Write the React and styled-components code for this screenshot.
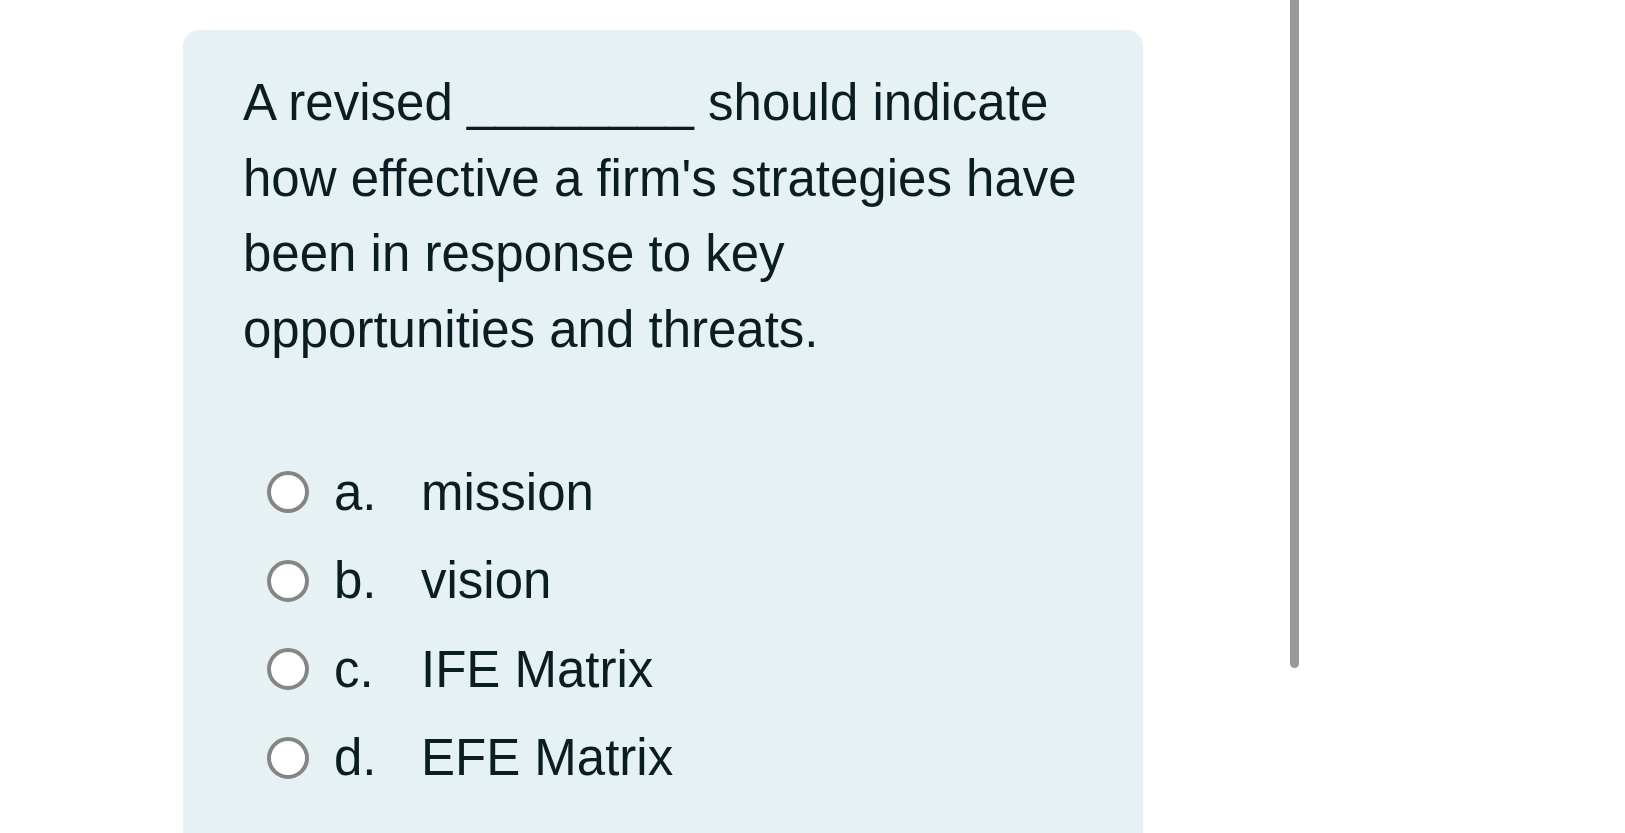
import styled, { createGlobalStyle } from 'styled-components';

const GlobalStyle = createGlobalStyle`
  html, body {
    margin: 0;
    padding: 0;
    background: #ffffff;
    overflow: hidden;
  }
  body {
    font-family: "Liberation Sans", Arial, sans-serif;
    color: #0a1d22;
  }
`;

const Page = styled.div`
  display: flex;
  align-items: stretch;
  height: 833px;
  padding-left: 183px;
  box-sizing: border-box;
  overflow: hidden;
`;

const Card = styled.div`
  width: 960px;
  margin-top: 30px;
  background: #e5f1f3;
  border-radius: 16px 16px 0 0;
  padding: 35px 60px 0 60px;
  box-sizing: border-box;
`;

const Question = styled.p`
  margin: 0;
  font-size: 51px;
  line-height: 75.5px;
`;

const Options = styled.ul`
  list-style: none;
  margin: 81px 0 0 0;
  padding: 0 0 0 24px;
`;

const Option = styled.li`
  display: flex;
  align-items: center;
  height: 88.5px;
  font-size: 51px;
  line-height: 75.5px;
`;

const Radio = styled.span`
  width: 42px;
  height: 42px;
  box-sizing: border-box;
  border: 4.5px solid #858585;
  border-radius: 50%;
  background: #ffffff;
  flex-shrink: 0;
  margin-right: 25px;
`;

const Letter = styled.span`
  width: 87px;
  flex-shrink: 0;
`;

const ScrollTrack = styled.div`
  align-self: flex-start;
  margin-left: 147px;
  width: 9px;
  height: 668px;
  background: #999999;
  border-radius: 0 0 5px 5px;
`;

const options = [
  { letter: 'a.', text: 'mission' },
  { letter: 'b.', text: 'vision' },
  { letter: 'c.', text: 'IFE Matrix' },
  { letter: 'd.', text: 'EFE Matrix' },
];

const App = () => {
  return (
    <>
      <GlobalStyle />
      <Page>
        <Card>
          <Question>
            A revised ________ should indicate how effective a firm's strategies have been in response to key
            opportunities and threats.
          </Question>
          <Options>
            {options.map((o) => (
              <Option key={o.letter}>
                <Radio />
                <Letter>{o.letter}</Letter>
                <span>{o.text}</span>
              </Option>
            ))}
          </Options>
        </Card>
        <ScrollTrack />
      </Page>
    </>
  );
};

export default App;
